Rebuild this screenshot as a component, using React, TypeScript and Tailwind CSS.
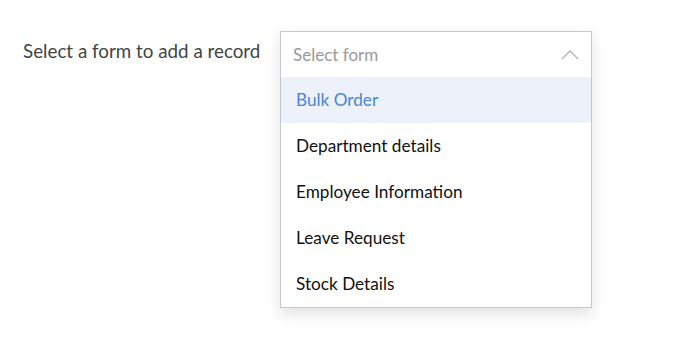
import React from "react";

const items = ["Bulk Order", "Department details", "Employee Information", "Leave Request", "Stock Details"];

export default function App() {
  return (
    <div className="w-[675px] h-[343px] bg-white flex" style={{ fontFamily: "Lato, 'Open Sans', sans-serif" }}>
      <div className="pl-[23px] pt-[39px] w-[280px] text-[18.8px] leading-[24px] text-[#444444] whitespace-nowrap">
        Select a form to add a record
      </div>
      <div className="mt-[31px] w-[312px] h-[277px] border border-[#c6c6cc] bg-white shadow-[0_6px_14px_rgba(0,0,0,0.12)] flex flex-col">
        <div className="h-[45px] flex items-center justify-between pl-[12px] pr-[12px]">
          <span className="text-[17px] text-[#9a9a9a] pt-[1px]">Select form</span>
          <svg width="18" height="12" viewBox="0 0 18 12" fill="none">
            <path d="M1 10 L9 2 L17 10" stroke="#b4b4bc" strokeWidth="1.3" />
          </svg>
        </div>
        {items.map((it, i) => (
          <div
            key={it}
            className={
              i === 0
                ? "h-[46px] flex items-center pl-[15px] text-[17.2px] bg-[#edf2fa] text-[#4a85d6]"
                : "h-[46px] flex items-center pl-[15px] text-[17.2px] text-[#111111]"
            }
          >
            {it}
          </div>
        ))}
      </div>
    </div>
  );
}
